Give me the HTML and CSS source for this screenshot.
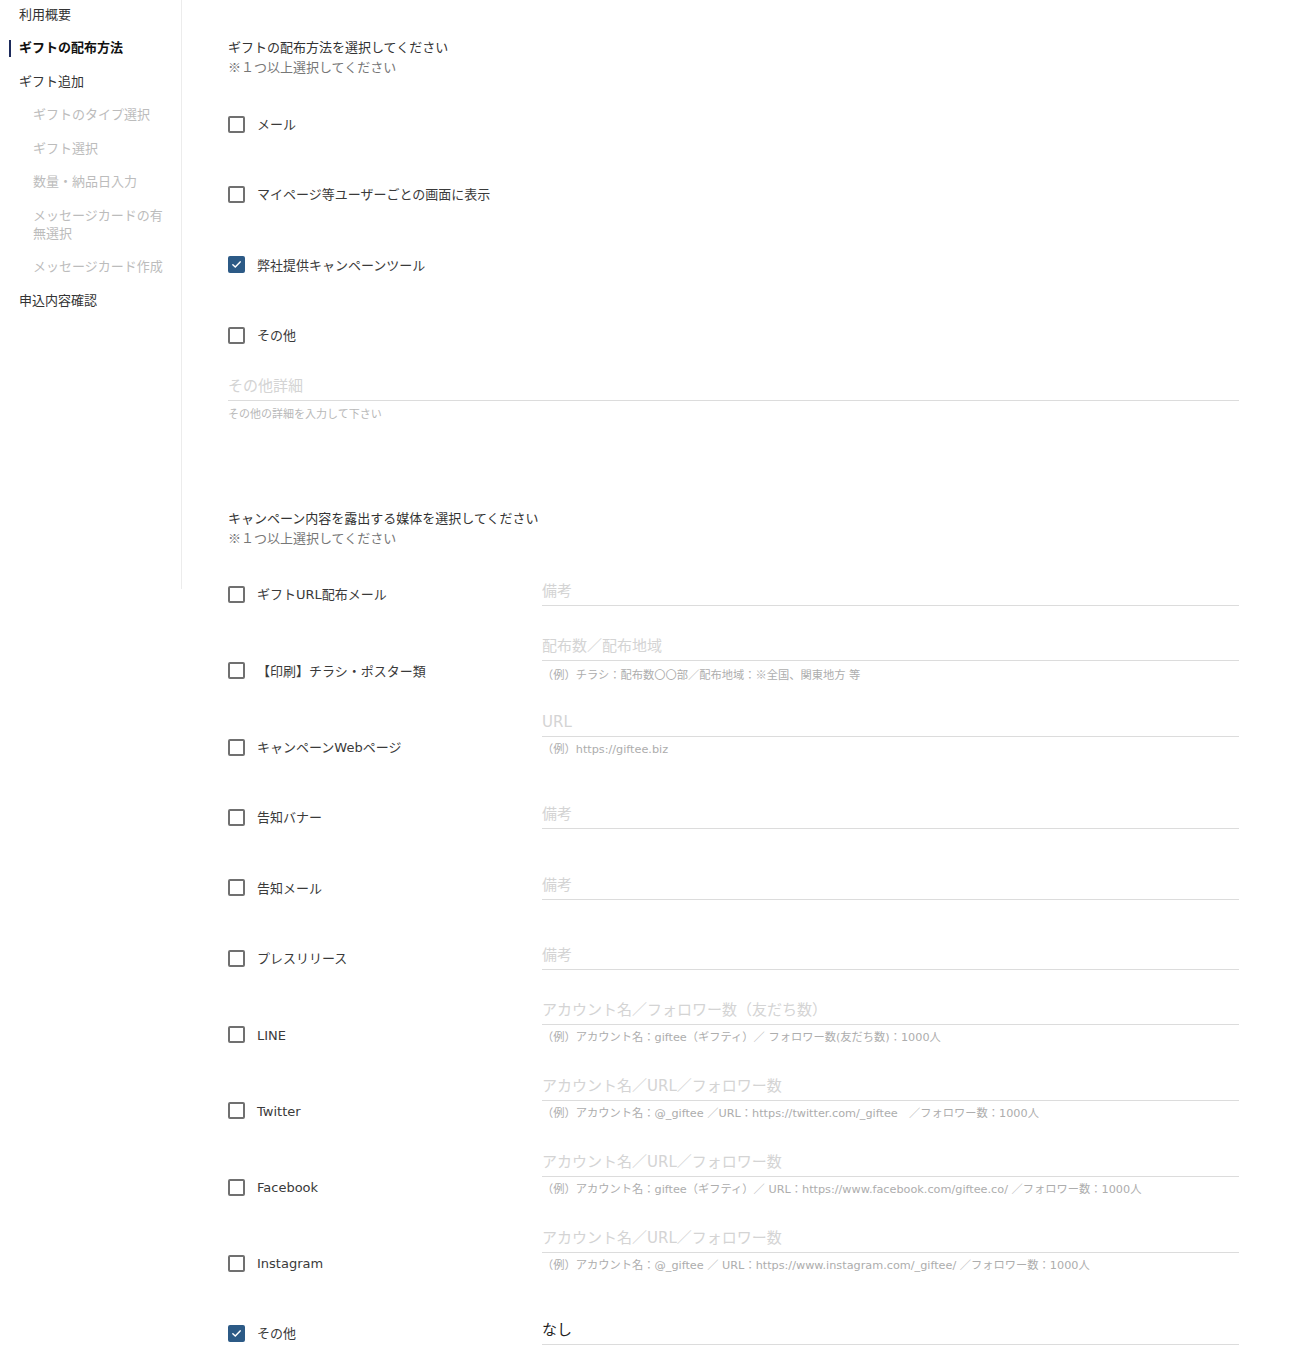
FILE: index.html
```html
<!DOCTYPE html>
<html lang="ja">
<head>
<meta charset="utf-8">
<title>ギフトの配布方法</title>
<link rel="stylesheet" href="styles.css">
</head>
<body>
<div class="page">
  <aside class="sidebar">
    <ul class="nav">
      <li class="nav-item">利用概要</li>
      <li class="nav-item active">ギフトの配布方法</li>
      <li class="nav-item">ギフト追加</li>
      <li class="nav-item sub">ギフトのタイプ選択</li>
      <li class="nav-item sub">ギフト選択</li>
      <li class="nav-item sub">数量・納品日入力</li>
      <li class="nav-item sub">メッセージカードの有無選択</li>
      <li class="nav-item sub">メッセージカード作成</li>
      <li class="nav-item">申込内容確認</li>
    </ul>
  </aside>

  <main class="main">
    <section class="section first">
      <p class="q-title">ギフトの配布方法を選択してください</p>
      <p class="q-note">※１つ以上選択してください</p>
      <div class="opts">
        <div class="opt"><label class="cb-label"><span class="cb"></span><span class="cb-text">メール</span></label></div>
        <div class="opt"><label class="cb-label"><span class="cb"></span><span class="cb-text">マイページ等ユーザーごとの画面に表示</span></label></div>
        <div class="opt"><label class="cb-label"><span class="cb checked"><svg viewBox="0 0 16 16" class="tick"><path d="M3.5 8.2l3 3 6-6.4" fill="none" stroke="#fff" stroke-width="1.8" stroke-linecap="round" stroke-linejoin="round"/></svg></span><span class="cb-text">弊社提供キャンペーンツール</span></label></div>
        <div class="opt"><label class="cb-label"><span class="cb"></span><span class="cb-text">その他</span></label></div>
      </div>
      <div class="field">
        <div class="input"><span class="ph">その他詳細</span></div>
        <div class="helper">その他の詳細を入力して下さい</div>
      </div>
    </section>

    <section class="section second">
      <p class="q-title">キャンペーン内容を露出する媒体を選択してください</p>
      <p class="q-note">※１つ以上選択してください</p>
      <div class="media">
        <div class="mrow plain">
          <label class="cb-label"><span class="cb"></span><span class="cb-text">ギフトURL配布メール</span></label>
          <div class="field"><div class="input"><span class="ph">備考</span></div></div>
        </div>
        <div class="mrow help">
          <label class="cb-label"><span class="cb"></span><span class="cb-text">【印刷】チラシ・ポスター類</span></label>
          <div class="field"><div class="input"><span class="ph">配布数／配布地域</span></div><div class="helper ex">（例）チラシ：配布数〇〇部／配布地域：<span class="jp">※</span>全国、関東地方 等</div></div>
        </div>
        <div class="mrow help">
          <label class="cb-label"><span class="cb"></span><span class="cb-text">キャンペーンWebページ</span></label>
          <div class="field"><div class="input"><span class="ph">URL</span></div><div class="helper ex">（例）https://giftee.biz</div></div>
        </div>
        <div class="mrow plain">
          <label class="cb-label"><span class="cb"></span><span class="cb-text">告知バナー</span></label>
          <div class="field"><div class="input"><span class="ph">備考</span></div></div>
        </div>
        <div class="mrow plain">
          <label class="cb-label"><span class="cb"></span><span class="cb-text">告知メール</span></label>
          <div class="field"><div class="input"><span class="ph">備考</span></div></div>
        </div>
        <div class="mrow plain">
          <label class="cb-label"><span class="cb"></span><span class="cb-text">プレスリリース</span></label>
          <div class="field"><div class="input"><span class="ph">備考</span></div></div>
        </div>
        <div class="mrow help">
          <label class="cb-label"><span class="cb"></span><span class="cb-text">LINE</span></label>
          <div class="field"><div class="input"><span class="ph">アカウント名／フォロワー数（友だち数）</span></div><div class="helper ex">（例）アカウント名：giftee（ギフティ）／ フォロワー数(友だち数)：1000人</div></div>
        </div>
        <div class="mrow help">
          <label class="cb-label"><span class="cb"></span><span class="cb-text">Twitter</span></label>
          <div class="field"><div class="input"><span class="ph">アカウント名／URL／フォロワー数</span></div><div class="helper ex">（例）アカウント名：@_giftee ／URL：https://twitter.com/_giftee　／フォロワー数：1000人</div></div>
        </div>
        <div class="mrow help">
          <label class="cb-label"><span class="cb"></span><span class="cb-text">Facebook</span></label>
          <div class="field"><div class="input"><span class="ph">アカウント名／URL／フォロワー数</span></div><div class="helper ex">（例）アカウント名：giftee（ギフティ）／ URL：https://www.facebook.com/giftee.co/ ／フォロワー数：1000人</div></div>
        </div>
        <div class="mrow help">
          <label class="cb-label"><span class="cb"></span><span class="cb-text">Instagram</span></label>
          <div class="field"><div class="input"><span class="ph">アカウント名／URL／フォロワー数</span></div><div class="helper ex">（例）アカウント名：@_giftee ／ URL：https://www.instagram.com/_giftee/ ／フォロワー数：1000人</div></div>
        </div>
        <div class="mrow plain">
          <label class="cb-label"><span class="cb checked"><svg viewBox="0 0 16 16" class="tick"><path d="M3.5 8.2l3 3 6-6.4" fill="none" stroke="#fff" stroke-width="1.8" stroke-linecap="round" stroke-linejoin="round"/></svg></span><span class="cb-text">その他</span></label>
          <div class="field"><div class="input"><span class="val">なし</span></div></div>
        </div>
      </div>
    </section>
  </main>
</div>
</body>
</html>
```

FILE: styles.css
```css
* { box-sizing: border-box; }

html, body {
  margin: 0;
  padding: 0;
  background: #fff;
}

body {
  font-family: "Noto Sans CJK JP", "Noto Sans", sans-serif;
  color: #333;
  font-size: 13px;
}

p { margin: 0; }

.page {
  display: flex;
  align-items: flex-start;
  width: 1310px;
}

/* Sidebar */
.sidebar {
  width: 182px;
  flex: 0 0 182px;
  height: 589px;
  border-right: 1px solid #ececec;
}

.nav {
  list-style: none;
  margin: -3px 0 0 0;
  padding: 0;
}

.nav-item {
  position: relative;
  padding: 7.75px 16px 7.75px 19px;
  line-height: 18px;
  font-size: 13px;
  color: #333;
}

.nav-item.active {
  font-weight: 700;
  color: #111;
}

.nav-item.active::before {
  content: "";
  position: absolute;
  left: 9px;
  top: 9px;
  width: 2px;
  height: 17px;
  background: #1d2b5c;
}

.nav-item.sub {
  padding-left: 33px;
  color: #bcbcbc;
}

/* Main */
.main {
  flex: 1 1 auto;
  padding: 37px 71px 0 46px;
}

.q-title {
  font-size: 13px;
  line-height: 20px;
  color: #333;
}

.q-note {
  font-size: 13px;
  line-height: 20px;
  color: #777;
}

.section.second {
  margin-top: 88px;
}

.opts {
  margin-top: 12px;
}

.opt {
  height: 70.33px;
  display: flex;
  align-items: center;
}

.cb-label {
  display: flex;
  align-items: center;
  height: 20px;
  font-size: 13px;
  color: #3a3a3a;
}

.cb-text {
  font-family: "DejaVu Sans", "Noto Sans CJK JP", sans-serif;
  line-height: 18px;
  padding-top: 2px;
}

.cb {
  width: 17px;
  height: 17px;
  border: 2px solid #707070;
  border-radius: 2px;
  margin-right: 12px;
  flex: 0 0 17px;
  display: flex;
  align-items: center;
  justify-content: center;
}

.cb.checked {
  border-color: #2c5a86;
  background: #2c5a86;
}

.tick {
  width: 15px;
  height: 15px;
  display: block;
}

/* Fields */
.input {
  height: 31px;
  padding-top: 2px;
  line-height: 28px;
  border-bottom: 1px solid #dcdcdc;
  font-size: 15px;
  font-family: "DejaVu Sans", "Noto Sans CJK JP", sans-serif;
}

.ph {
  color: #d4d4d4;
}

.val {
  color: #222;
}

.helper {
  margin-top: 5px;
  font-size: 11px;
  line-height: 14px;
  color: #b8b8b8;
}

.helper.ex {
  margin-top: 6px;
  font-size: 11.25px;
  color: #adadad;
  font-family: "DejaVu Sans", "Noto Sans CJK JP", sans-serif;
}

.jp {
  font-family: "Noto Sans CJK JP", sans-serif;
}

/* Media rows */
.media {
  margin-top: 11px;
}

.mrow {
  display: grid;
  grid-template-columns: 314px 1fr;
  align-items: start;
}

.mrow.plain {
  height: 70.5px;
}

.mrow.help {
  height: 76.2px;
}

.mrow.plain .cb-label {
  margin-top: 25px;
}

.mrow.plain .field {
  padding-top: 16px;
}

.mrow.help .cb-label {
  margin-top: 31px;
}
```
